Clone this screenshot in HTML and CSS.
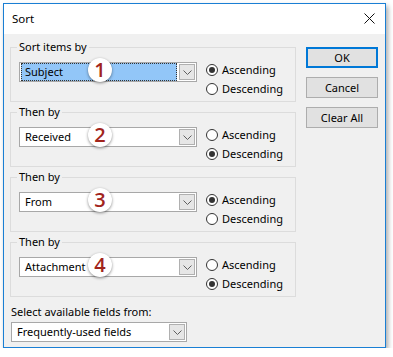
FILE: index.html
```html
<!DOCTYPE html>
<html>
<head>
<meta charset="utf-8">
<link rel="stylesheet" href="styles.css">
</head>
<body>
<div class="window">
  <div class="titlebar">
    <span class="title">Sort</span>
    <svg class="close" width="11" height="11" viewBox="0 0 11 11"><path d="M0.5 0.5 L10.5 10.5 M10.5 0.5 L0.5 10.5" stroke="#111" stroke-width="1"/></svg>
  </div>
  <div class="content">
    <div class="main">
      <div class="left">
        <div class="group">
          <span class="legend">Sort items by</span>
          <div class="combo">
            <span class="value selected">Subject</span>
            <span class="drop"><svg width="9" height="5" viewBox="0 0 9 5"><path d="M0.5 0.5 L4.5 4.5 L8.5 0.5" fill="none" stroke="#606060"/></svg></span>
            <span class="badge">1</span>
          </div>
          <div class="radios">
            <div class="radio"><span class="circle checked"></span>Ascending</div>
            <div class="radio"><span class="circle"></span>Descending</div>
          </div>
        </div>
        <div class="group">
          <span class="legend">Then by</span>
          <div class="combo">
            <span class="value">Received</span>
            <span class="drop"><svg width="9" height="5" viewBox="0 0 9 5"><path d="M0.5 0.5 L4.5 4.5 L8.5 0.5" fill="none" stroke="#606060"/></svg></span>
            <span class="badge">2</span>
          </div>
          <div class="radios">
            <div class="radio"><span class="circle"></span>Ascending</div>
            <div class="radio"><span class="circle checked"></span>Descending</div>
          </div>
        </div>
        <div class="group">
          <span class="legend">Then by</span>
          <div class="combo">
            <span class="value">From</span>
            <span class="drop"><svg width="9" height="5" viewBox="0 0 9 5"><path d="M0.5 0.5 L4.5 4.5 L8.5 0.5" fill="none" stroke="#606060"/></svg></span>
            <span class="badge">3</span>
          </div>
          <div class="radios">
            <div class="radio"><span class="circle checked"></span>Ascending</div>
            <div class="radio"><span class="circle"></span>Descending</div>
          </div>
        </div>
        <div class="group">
          <span class="legend">Then by</span>
          <div class="combo">
            <span class="value">Attachment</span>
            <span class="drop"><svg width="9" height="5" viewBox="0 0 9 5"><path d="M0.5 0.5 L4.5 4.5 L8.5 0.5" fill="none" stroke="#606060"/></svg></span>
            <span class="badge">4</span>
          </div>
          <div class="radios">
            <div class="radio"><span class="circle"></span>Ascending</div>
            <div class="radio"><span class="circle checked"></span>Descending</div>
          </div>
        </div>
      </div>
      <div class="buttons">
        <div class="btn default">OK</div>
        <div class="btn">Cancel</div>
        <div class="btn">Clear All</div>
      </div>
    </div>
    <div class="fields-label">Select available fields from:</div>
    <div class="combo wide">
      <span class="value">Frequently-used fields</span>
      <span class="drop"><svg width="9" height="5" viewBox="0 0 9 5"><path d="M0.5 0.5 L4.5 4.5 L8.5 0.5" fill="none" stroke="#606060"/></svg></span>
    </div>
  </div>
</div>
</body>
</html>
```

FILE: styles.css
```css
html, body {
  margin: 0;
  padding: 0;
  background: #ffffff;
}
body {
  font-family: "Noto Sans", "Open Sans", sans-serif;
  font-size: 11px;
  color: #000;
}
.window {
  margin: 3px 0 0 3px;
  width: 381px;
  height: 343px;
  border: 1px solid #1a7fd4;
  background: #f0f0f0;
  box-shadow: 2px 3px 5px rgba(0, 0, 0, 0.35);
  display: flex;
  flex-direction: column;
}
.titlebar {
  height: 30px;
  background: #ffffff;
  display: flex;
  align-items: center;
  justify-content: space-between;
  padding: 0 10px 0 8px;
  flex: none;
}
.title {
  font-size: 11.5px;
  color: #000;
  margin-top: -1px;
}
.close {
  display: block;
  margin-top: -1px;
}
.content {
  padding: 13px 0 0 6px;
}
.main {
  display: flex;
  align-items: flex-start;
}
.left {
  display: flex;
  flex-direction: column;
  gap: 10px;
  width: 286px;
}
.group {
  position: relative;
  height: 41px;
  border: 1px solid #dcdcdc;
  display: flex;
  align-items: flex-start;
  padding: 12px 8px 0 8px;
  box-sizing: content-box;
  width: 268px;
}
.legend {
  position: absolute;
  left: 6px;
  top: -9px;
  padding: 0 2px;
  background: #f0f0f0;
  line-height: 16px;
}
.combo {
  position: relative;
  margin-top: 2px;
  width: 175px;
  height: 18px;
  border: 1px solid #a8a8a8;
  background: #ffffff;
  display: flex;
  align-items: center;
  justify-content: space-between;
  padding: 0 0 0 1px;
  flex: none;
}
.value {
  padding: 0 3px;
  line-height: 16px;
  height: 16px;
  border: 1px solid transparent;
}
.value.selected {
  flex: 1;
  background: #92c6f8;
  border: 1px dotted #333;
  margin-right: 2px;
}
.drop {
  width: 16px;
  height: 16px;
  border: 1px solid #b0b0b0;
  background: #e6e6e6;
  display: flex;
  align-items: center;
  justify-content: center;
  box-sizing: border-box;
  margin-right: 1px;
}
.drop svg {
  display: block;
}
.badge {
  position: absolute;
  left: 68px;
  top: -5px;
  width: 24px;
  height: 24px;
  border-radius: 50%;
  background: #ffffff;
  box-shadow: 0 1px 3px rgba(0, 0, 0, 0.45);
  color: #a1241c;
  font-family: "Open Sans", sans-serif;
  font-size: 20px;
  font-weight: 600;
  line-height: 24px;
  text-align: center;
}
.radios {
  margin-left: 9px;
  display: flex;
  flex-direction: column;
}
.radio {
  height: 19px;
  display: flex;
  align-items: center;
  gap: 4px;
}
.circle {
  width: 10px;
  height: 10px;
  border: 1px solid #333;
  border-radius: 50%;
  background: #fff;
  position: relative;
  flex: none;
}
.circle.checked::after {
  content: "";
  position: absolute;
  left: 2px;
  top: 2px;
  width: 6px;
  height: 6px;
  border-radius: 50%;
  background: #333;
}
.buttons {
  margin-left: 10px;
  display: flex;
  flex-direction: column;
  gap: 9px;
}
.btn {
  width: 70px;
  height: 19px;
  border: 1px solid #adadad;
  background: #e1e1e1;
  text-align: center;
  line-height: 19px;
}
.btn.default {
  border: 2px solid #0078d7;
  width: 68px;
  height: 17px;
  line-height: 17px;
}
.fields-label {
  margin: 7px 0 0 1px;
  line-height: 16px;
}
.combo.wide {
  margin: 2px 0 0 1px;
  width: 173px;
}
```
